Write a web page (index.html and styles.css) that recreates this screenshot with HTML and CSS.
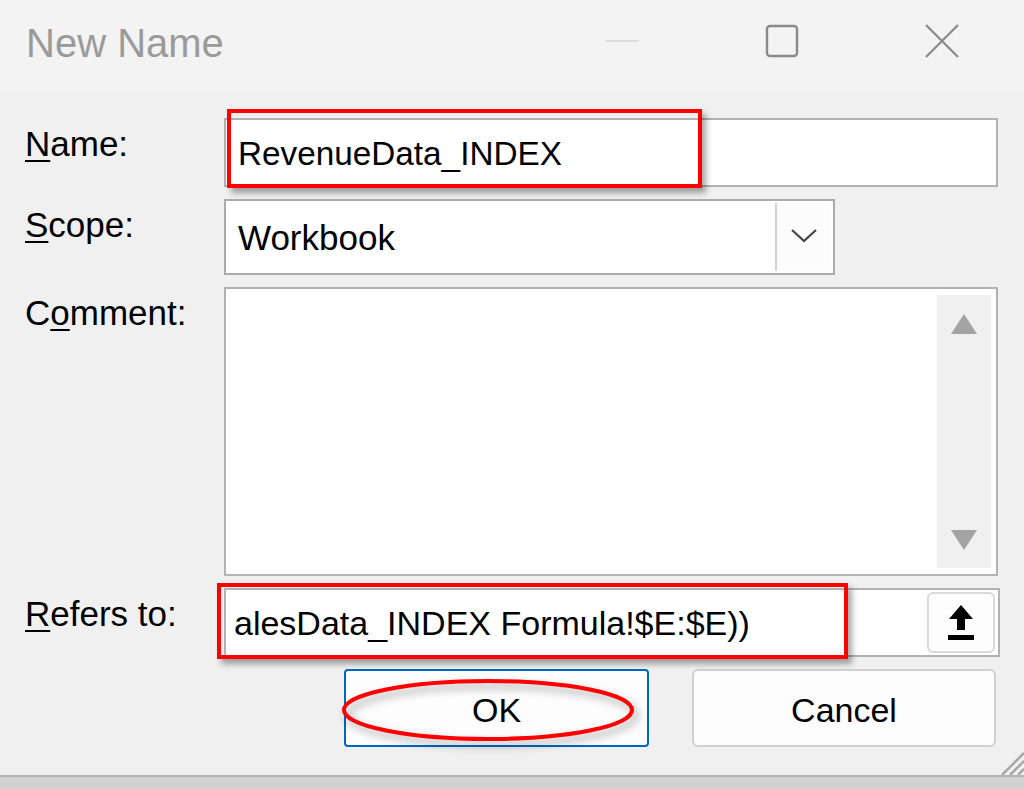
FILE: index.html
```html
<!DOCTYPE html>
<html>
<head>
<meta charset="utf-8">
<title>New Name</title>
<link rel="stylesheet" href="styles.css">
</head>
<body>
<div class="window">
  <header class="titlebar">
    <div class="title">New Name</div>
    <div class="controls">
      <div class="ctl"><svg width="34" height="4" viewBox="0 0 34 4"><line x1="0" y1="2" x2="34" y2="2" stroke="#dcdcdc" stroke-width="2"/></svg></div>
      <div class="ctl"><svg width="34" height="34" viewBox="0 0 34 34"><rect x="2" y="2" width="30" height="30" rx="3" fill="none" stroke="#8a8a8a" stroke-width="2.4"/></svg></div>
      <div class="ctl"><svg width="36" height="36" viewBox="0 0 36 36"><path d="M2 2 L34 34 M34 2 L2 34" stroke="#8a8a8a" stroke-width="2.2" fill="none"/></svg></div>
    </div>
  </header>
  <main class="content">
    <div class="form">
      <div class="lbl"><u>N</u>ame:</div>
      <div class="field input">
        <span class="val name-val">RevenueData_INDEX</span>
        <div class="mark mark-name"></div>
      </div>

      <div class="lbl"><u>S</u>cope:</div>
      <div class="field combo">
        <span class="val">Workbook</span>
        <div class="dd"><svg width="28" height="16" viewBox="0 0 28 16"><path d="M2 3 L14 14 L26 3" fill="none" stroke="#444" stroke-width="2.2"/></svg></div>
      </div>

      <div class="lbl">C<u>o</u>mment:</div>
      <div class="field textarea">
        <div class="scroll">
          <svg width="26" height="20" viewBox="0 0 26 20"><path d="M13 0 L26 20 L0 20 Z" fill="#a3a3a3"/></svg>
          <svg width="26" height="20" viewBox="0 0 26 20"><path d="M0 0 L26 0 L13 20 Z" fill="#a3a3a3"/></svg>
        </div>
      </div>

      <div class="lbl"><u>R</u>efers to:</div>
      <div class="field input refers">
        <div class="clip"><span class="val shifted">alesData_INDEX Formula!$E:$E))</span></div>
        <div class="collapse"><svg width="26" height="38" viewBox="0 0 26 38"><path d="M13 1 L25 15 L17 15 L17 26 L9 26 L9 15 L1 15 Z" fill="#000"/><rect x="0" y="31" width="26" height="5" fill="#000"/></svg></div>
        <div class="mark mark-refers"></div>
      </div>
    </div>
    <div class="buttons">
      <div class="btn ok">OK
        <svg class="ellipse" width="296" height="68" viewBox="0 0 296 68"><ellipse cx="146" cy="31" rx="144" ry="29" fill="none" stroke="#ff0000" stroke-width="4"/></svg>
      </div>
      <div class="btn cancel">Cancel</div>
    </div>
    <svg class="grip" width="30" height="30" viewBox="0 0 30 30"><path d="M30 8 L8 30 M30 16 L16 30 M30 24 L24 30" stroke="#a8a8a8" stroke-width="2.5"/></svg>
  </main>
  <footer class="bottom"></footer>
</div>
</body>
</html>
```

FILE: styles.css
```css
* { box-sizing: border-box; }

html, body {
  margin: 0;
  padding: 0;
}

body {
  width: 1024px;
  height: 789px;
  overflow: hidden;
  background: #f0f0f0;
  font-family: "Liberation Sans", Arial, sans-serif;
  color: #000;
}

.window {
  width: 1024px;
  height: 789px;
  display: flex;
  flex-direction: column;
}

.titlebar {
  height: 92px;
  flex: none;
  background: #f3f3f3;
  display: flex;
  justify-content: space-between;
  align-items: flex-start;
}

.title {
  font-size: 40px;
  line-height: 82px;
  padding-top: 2px;
  padding-left: 26px;
  color: #9a9a9a;
}

.controls {
  display: flex;
  padding-right: 2px;
}

.ctl {
  width: 160px;
  height: 82px;
  display: flex;
  align-items: center;
  justify-content: center;
}

.content {
  flex: 1;
  position: relative;
  background: #f0f0f0;
}

.form {
  display: grid;
  grid-template-columns: 199px 774px;
  grid-template-rows: 69px 76px 289px 69px;
  row-gap: 12px;
  padding: 26px 0 0 25px;
}

.lbl {
  font-size: 35px;
  line-height: 35px;
  padding-top: 8px;
  white-space: nowrap;
}

.lbl u {
  text-decoration-thickness: 2px;
  text-underline-offset: 4px;
}

.field {
  position: relative;
  background: #fff;
  border: 2px solid #b2b2b2;
  display: flex;
  align-items: center;
}

.val {
  font-size: 34px;
  white-space: nowrap;
  padding-left: 12px;
  padding-top: 2px;
}

.name-val {
  font-size: 33.3px;
}

.combo {
  width: 611px;
  justify-self: start;
  border-color: #ababab;
}

.combo .val {
  flex: 1;
  font-size: 35px;
}

.dd {
  width: 56px;
  height: 68px;
  margin-right: 2px;
  background: #fcfcfc;
  border-left: 2px solid #d2d2d2;
  display: flex;
  align-items: center;
  justify-content: center;
  padding-bottom: 4px;
}

.textarea {
  align-items: stretch;
  justify-content: flex-end;
  padding: 6px 5px 6px 0;
}

.scroll {
  width: 54px;
  background: #f0f0f0;
  display: flex;
  flex-direction: column;
  justify-content: space-between;
  align-items: center;
  padding: 19px 0 18px;
}

.refers {
  width: 776px;
  padding-right: 3px;
}

.clip {
  flex: 1;
  overflow: hidden;
  margin-left: 8px;
}

.shifted {
  display: block;
  padding-left: 0;
}

.collapse {
  width: 68px;
  height: 61px;
  background: #fdfdfd;
  border: 2px solid #dadada;
  border-radius: 6px;
  display: flex;
  align-items: center;
  justify-content: center;
}

.mark {
  position: absolute;
  border: 4px solid #ff0000;
  box-shadow: 4px 5px 6px rgba(0, 0, 0, 0.35);
  pointer-events: none;
}

.mark-name {
  left: 1px;
  top: -11px;
  width: 475px;
  height: 79px;
}

.mark-refers {
  left: -9px;
  top: -7px;
  width: 631px;
  height: 76px;
}

.buttons {
  display: flex;
  justify-content: flex-end;
  gap: 43px;
  padding-right: 28px;
  margin-top: 12px;
}

.btn {
  position: relative;
  height: 78px;
  width: 304px;
  background: #fdfdfd;
  border: 2px solid #d0d0d0;
  border-radius: 6px;
  font-size: 34px;
  display: flex;
  align-items: center;
  justify-content: center;
  padding-top: 4px;
}

.ok {
  width: 305px;
  border-color: #0067c0;
  border-radius: 4px;
}

.ellipse {
  position: absolute;
  left: -4px;
  top: 8px;
  filter: drop-shadow(4px 5px 4px rgba(0, 0, 0, 0.35));
}

.grip {
  position: absolute;
  right: 0;
  bottom: 0;
}

.bottom {
  height: 14px;
  flex: none;
  background: #d2d2d2;
  border-top: 2px solid #b4b4b4;
}
```
